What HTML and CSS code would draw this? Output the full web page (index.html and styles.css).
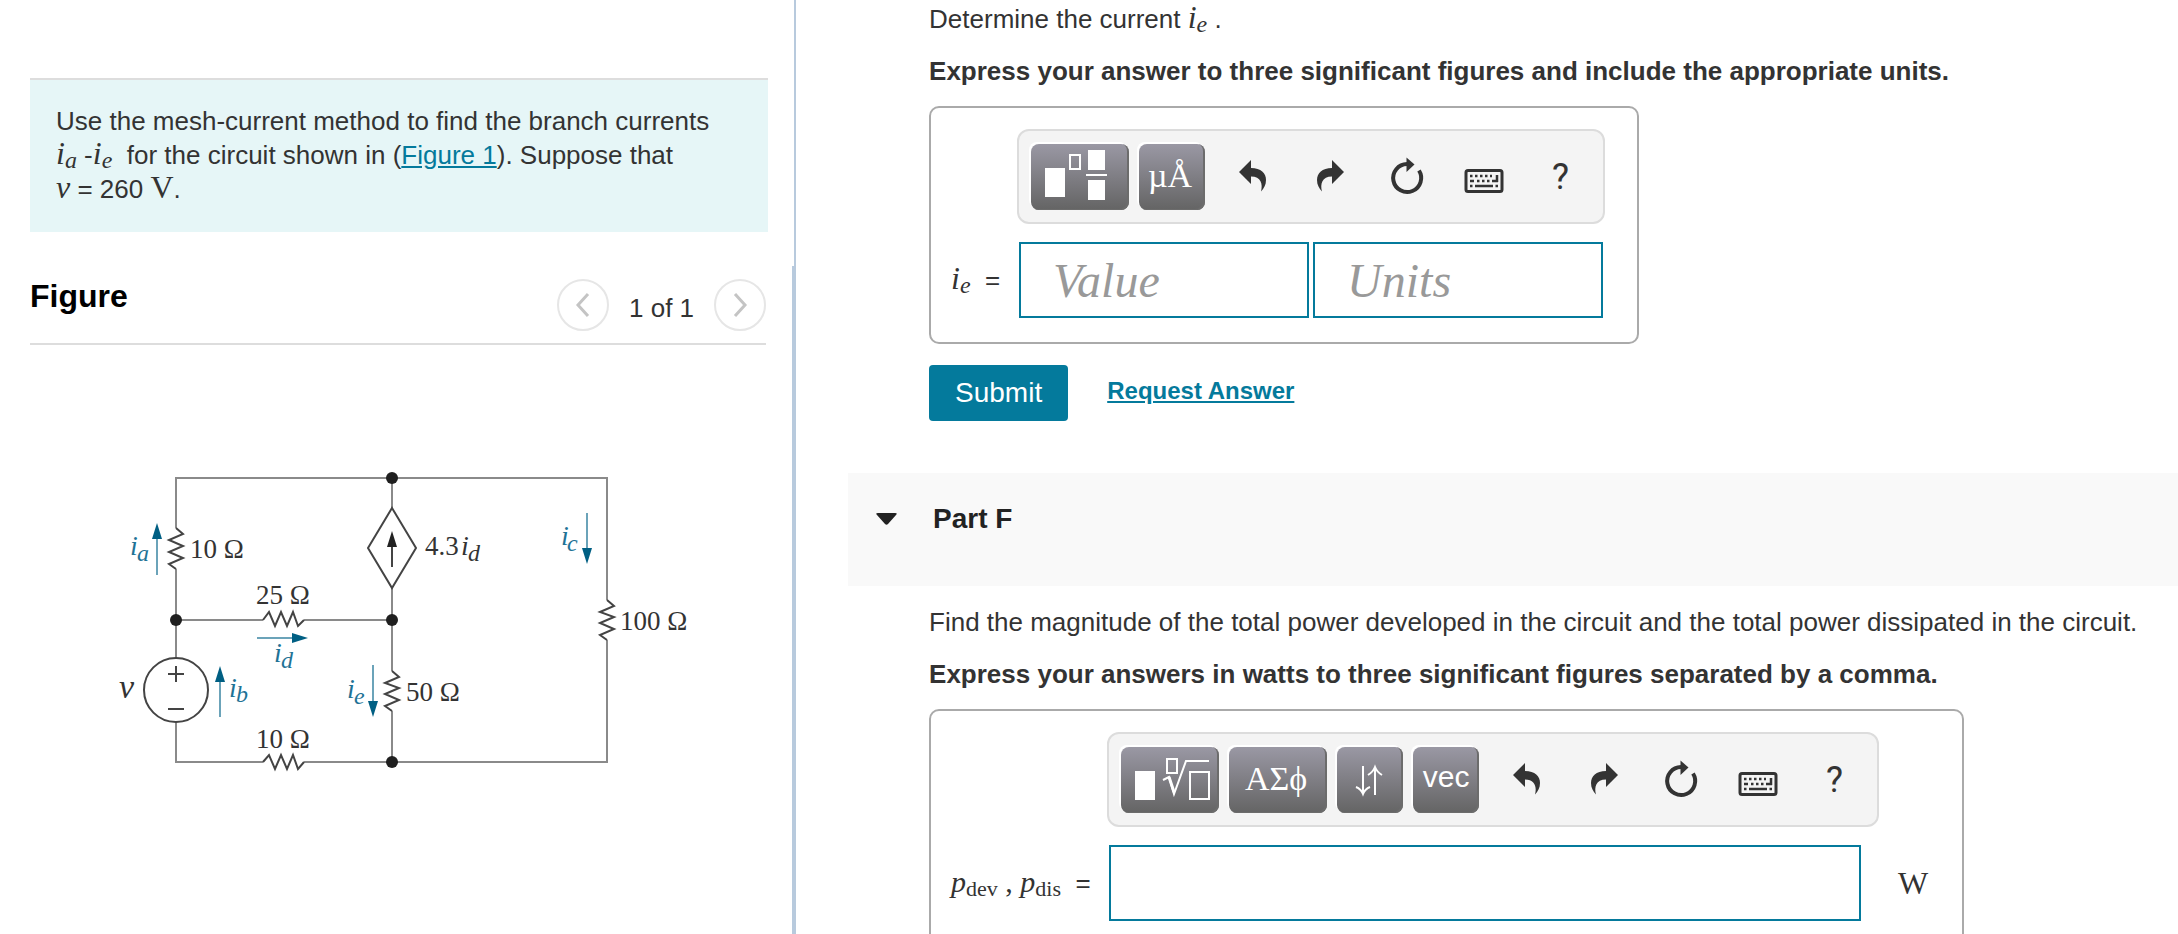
FILE: index.html
```
<!DOCTYPE html>
<html lang="en">
<head>
  <meta charset="UTF-8">
  <meta name="viewport" content="width=device-width, initial-scale=1.0">
  <title>Mesh-Current Method</title>
  <link rel="stylesheet" href="styles.css">
</head>
<body>
  <!-- Shared toolbar icons -->
  <svg class="sprite" aria-hidden="true">
    <symbol id="icon-undo" viewBox="0 0 40 40">
      <path d="M6 15L18 3V11C28 11 33 16 33 23C33 28 31 31 28 34.500C30 27 28 19.500 18 19.500V27Z" fill="#333"/>
    </symbol>
    <symbol id="icon-redo" viewBox="0 0 40 40">
      <path d="M34 15L22 3V11C12 11 7 16 7 23C7 28 9 31 12 34.500C10 27 12 19.500 22 19.500V27Z" fill="#333"/>
    </symbol>
    <symbol id="icon-reset" viewBox="0 0 40 40">
      <path d="M32 13.500A14 14 0 1 1 20 7" fill="none" stroke="#333" stroke-width="4"/>
      <path d="M19.500 0.500L27.500 7.500L19.500 15Z" fill="#333"/>
    </symbol>
    <symbol id="icon-keyboard" viewBox="0 0 40 40">
      <rect x="2" y="13.500" width="36" height="21" rx="2" fill="none" stroke="#333" stroke-width="3"/>
      <path d="M6 19H28" stroke="#333" stroke-width="2.500" stroke-dasharray="2.500 2.500"/>
      <path d="M6 24H10M13 24H15.500M18 24H20.500M23 24H25.500M28 24H34M33 18V25M6 29H8.500M11 29H29M31.500 29H34" fill="none" stroke="#333" stroke-width="2.500"/>
    </symbol>
  </svg>

  <div class="page">
    <aside class="sidebar">
      <section class="problem">
        <div class="problem-text">
          Use the mesh-current method to find the branch currents
          <span class="nowrap"><span class="math"><i>i</i><sub><i>a</i></sub></span> -<span class="math"><i>i</i><sub><i>e</i></sub></span></span>&nbsp; for the circuit shown in (<a href="#figure">Figure 1</a>). Suppose that
          <span class="nowrap"><span class="math"><i>v</i></span> = 260 <span class="math">V</span>.</span>
        </div>
      </section>

      <section class="figure" id="figure">
        <div class="figure-header">
          <h2>Figure</h2>
          <div class="pager">
            <button class="pager-button" aria-label="Previous figure">
              <svg width="16" height="26" viewBox="0 0 16 26"><path d="M13 2L3 13L13 24" fill="none" stroke="#c4c4c4" stroke-width="3"/></svg>
            </button>
            <span class="pager-count">1 of 1</span>
            <button class="pager-button" aria-label="Next figure">
              <svg width="16" height="26" viewBox="0 0 16 26"><path d="M3 2L13 13L3 24" fill="none" stroke="#c4c4c4" stroke-width="3"/></svg>
            </button>
          </div>
        </div>

        <svg class="circuit" width="590" height="315" viewBox="0 0 590 315" role="img" aria-label="Circuit diagram">
          <!-- Wires -->
          <g class="wire">
            <path d="M66 68V18H497V140M497 180V302H194M153 302H66V262M66 199V109"/>
            <path d="M66 160H153M194 160H282M282 18V48M282 128V211M282 251V302"/>
          </g>
          <!-- Resistors and sources -->
          <g class="part">
            <path d="M66 68L73 74L59 80L73 86L59 92L73 98L59 104L66 109"/>
            <path d="M282 211L289 217L275 223L289 228L275 234L289 240L275 246L282 251"/>
            <path d="M497 140L504 146L490 152L504 157L490 163L504 169L490 175L497 180"/>
            <path d="M153 160L159 152L165 166L171 152L177 166L183 152L188 166L194 160"/>
            <path d="M153 302L159 295L165 309L171 295L177 309L183 295L188 309L194 302"/>
            <circle cx="66" cy="230" r="32"/>
            <path d="M58 214H74M66 206V222M58 249H74"/>
            <path d="M282 48L306 88L282 128L258 88Z"/>
            <path d="M282 107V84"/>
          </g>
          <path d="M282 71L287 87H277Z" fill="#222"/>
          <g fill="#1f1f1f">
            <circle cx="282" cy="18" r="6"/>
            <circle cx="66" cy="160" r="6"/>
            <circle cx="282" cy="160" r="6"/>
            <circle cx="282" cy="302" r="6"/>
          </g>
          <!-- Branch current arrows -->
          <path class="arrow-line" d="M47 115V76M110 257V220M147 178H185M263 205V245M477 53V92"/>
          <g class="arrow-head">
            <path d="M47 63L52 79H42Z"/>
            <path d="M110 206L115 222H105Z"/>
            <path d="M198 178L182 173V183Z"/>
            <path d="M263 257L258 241H268Z"/>
            <path d="M477 104L472 88H482Z"/>
          </g>
          <g class="label">
            <text x="80" y="98">10 Ω</text>
            <text x="146" y="144">25 Ω</text>
            <text x="146" y="288">10 Ω</text>
            <text x="296" y="241">50 Ω</text>
            <text x="510" y="170">100 Ω</text>
            <text x="315" y="95">4.3</text>
            <text x="351" y="95" class="var">i</text>
            <text x="358" y="101" class="var-sub">d</text>
            <text x="9" y="238" class="var source">v</text>
          </g>
          <g class="label current">
            <text x="20" y="95" class="var">i</text><text x="27" y="101" class="var-sub">a</text>
            <text x="119" y="237" class="var">i</text><text x="126" y="242" class="var-sub">b</text>
            <text x="451" y="85" class="var">i</text><text x="457" y="91" class="var-sub">c</text>
            <text x="164" y="202" class="var">i</text><text x="171" y="208" class="var-sub">d</text>
            <text x="237" y="238" class="var">i</text><text x="244" y="244" class="var-sub">e</text>
          </g>
        </svg>
      </section>
    </aside>

    <main class="content">
      <section class="part-body">
        <p>Determine the current <span class="math"><i>i</i><sub><i>e</i></sub></span> .</p>
        <p class="instructions">Express your answer to three significant figures and include the appropriate units.</p>

        <div class="answer-box answer-box-units">
          <div class="toolbar">
            <button class="key key-wide" aria-label="Templates">
              <svg width="98" height="66" viewBox="0 0 98 66">
                <path d="M14 24H34V53H14ZM57 6H74V26H57ZM55 30H76V32H55ZM57 36H74V56H57Z" fill="#fff"/>
                <rect x="39" y="11" width="10" height="14" fill="none" stroke="#fff" stroke-width="2"/>
              </svg>
            </button>
            <button class="key key-serif" aria-label="Units">µÅ</button>
            <div class="tools">
              <button class="tool" aria-label="Undo"><svg><use href="#icon-undo"/></svg></button>
              <button class="tool" aria-label="Redo"><svg><use href="#icon-redo"/></svg></button>
              <button class="tool" aria-label="Reset"><svg><use href="#icon-reset"/></svg></button>
              <button class="tool" aria-label="Keyboard shortcuts"><svg><use href="#icon-keyboard"/></svg></button>
              <button class="tool" aria-label="Help">?</button>
            </div>
          </div>
          <label class="answer-label" for="value"><span class="math"><i>i</i><sub><i>e</i></sub></span>&nbsp; =</label>
          <div class="fields">
            <input type="text" id="value" placeholder="Value">
            <input type="text" id="units" placeholder="Units" aria-label="Units">
          </div>
        </div>

        <div class="actions">
          <button class="submit">Submit</button>
          <a class="request" href="#">Request Answer</a>
        </div>
      </section>

      <div class="part-header">
        <button class="part-toggle" aria-label="Collapse Part F">
          <svg width="21" height="12" viewBox="0 0 21 12"><path d="M2 0H19Q22 0 20 2L12 11Q10.500 12.500 9 11L1 2Q-1 0 2 0Z" fill="#222"/></svg>
        </button>
        <h2>Part F</h2>
      </div>

      <section class="part-body">
        <p>Find the magnitude of the total power developed in the circuit and the total power dissipated in the circuit.</p>
        <p class="instructions">Express your answers in watts to three significant figures separated by a comma.</p>

        <div class="answer-box answer-box-power">
          <div class="toolbar">
            <button class="key key-wide" aria-label="Templates">
              <svg width="98" height="66" viewBox="0 0 98 66">
                <rect x="14" y="24" width="20" height="29" fill="#fff"/>
                <path d="M46 12H56V26H46ZM69 25H88V52H69Z" fill="none" stroke="#fff" stroke-width="2"/>
                <path d="M42 33L48 30L53 47L65 14H88" fill="none" stroke="#fff" stroke-width="2"/>
                <path d="M48 30L53 45" stroke="#fff" stroke-width="3"/>
              </svg>
            </button>
            <button class="key key-wide key-serif" aria-label="Symbols">ΑΣϕ</button>
            <button class="key" aria-label="Arrows">
              <svg width="66" height="66" viewBox="0 0 66 66">
                <path d="M26 19V47M19 40Q24 42 26 47Q28 42 33 40M38 48V20M31 28Q36 25 38 20Q40 25 45 28" fill="none" stroke="#fff" stroke-width="2"/>
              </svg>
            </button>
            <button class="key key-sans" aria-label="Vector">vec</button>
            <div class="tools">
              <button class="tool" aria-label="Undo"><svg><use href="#icon-undo"/></svg></button>
              <button class="tool" aria-label="Redo"><svg><use href="#icon-redo"/></svg></button>
              <button class="tool" aria-label="Reset"><svg><use href="#icon-reset"/></svg></button>
              <button class="tool" aria-label="Keyboard shortcuts"><svg><use href="#icon-keyboard"/></svg></button>
              <button class="tool" aria-label="Help">?</button>
            </div>
          </div>
          <label class="answer-label" for="power"><span class="math"><i>p</i><sub>dev</sub> , <i>p</i><sub>dis</sub></span>&nbsp; =</label>
          <div class="fields">
            <input type="text" id="power">
            <span class="math unit">W</span>
          </div>
        </div>
      </section>
    </main>
  </div>
</body>
</html>
```
FILE: styles.css
```
* {
  box-sizing: border-box;
}

body {
  margin: 0;
  background: #fff;
  color: #333;
  font-family: "Liberation Sans", Arial, sans-serif;
  font-size: 26px;
  line-height: 34px;
}

h2,
p {
  margin: 0;
}

a {
  color: #047a9c;
}

button {
  padding: 0;
  border: none;
  background: none;
  color: inherit;
  font-family: inherit;
  cursor: pointer;
}

.sprite {
  display: none;
}

.page {
  display: flex;
  height: 100vh;
}

.nowrap {
  white-space: nowrap;
}

/* Math text */
.math {
  font-family: "Liberation Serif", "Times New Roman", serif;
  font-size: 32px;
  line-height: 0;
}

.math sub {
  font-size: 24px;
  line-height: 0;
  vertical-align: -4px;
}

/* Left side */
.sidebar {
  display: flex;
  flex-direction: column;
  flex: none;
  width: 36.55%;
}

.problem {
  padding: 78px 26px 34px 30px;
  border-right: 2px solid #b8cadd;
}

.problem-text {
  padding: 24px 26px 26px;
  border-top: 2px solid #ddd;
  background: #e6f6f7;
}

.figure {
  flex: 1;
  padding: 13px 26px 0 30px;
  border-right: 4px solid #b8cadd;
}

.figure-header {
  display: flex;
  justify-content: space-between;
  padding-bottom: 12px;
  border-bottom: 2px solid #ddd;
}

.figure-header h2 {
  color: #000;
  font-size: 32px;
  line-height: 34px;
}

.pager {
  display: flex;
  align-items: center;
  gap: 20px;
}

.pager-count {
  padding-top: 6px;
}

.pager-button {
  display: flex;
  align-items: center;
  justify-content: center;
  width: 52px;
  height: 52px;
  border: 2px solid #e6e6e6;
  border-radius: 50%;
}

/* Circuit diagram */
.circuit {
  display: block;
  margin: 115px 0 0 80px;
}

.wire {
  fill: none;
  stroke: #8a8a8a;
  stroke-width: 2;
}

.part {
  fill: none;
  stroke: #444;
  stroke-width: 2;
}

.label {
  fill: #333;
  font-family: "Liberation Serif", "Times New Roman", serif;
  font-size: 27px;
}

.var,
.var-sub {
  font-style: italic;
}

.var {
  font-size: 28px;
}

.var-sub {
  font-size: 24px;
}

.source {
  font-size: 34px;
}

.current {
  fill: #1f7396;
}

.arrow-line {
  fill: none;
  stroke: #6ba3b9;
  stroke-width: 2;
}

.arrow-head {
  fill: #005f83;
}

/* Right side */
.content {
  flex: 1;
  min-width: 0;
  padding: 2px 0 0 52px;
  overflow-y: auto;
  scrollbar-width: none;
}

.part-body {
  padding-left: 81px;
}

.instructions {
  margin: 18px 0;
  font-weight: bold;
}

.answer-box {
  display: grid;
  row-gap: 18px;
  width: fit-content;
  padding: 21px 32px 24px 20px;
  border: 2px solid #aaa;
  border-radius: 10px;
}

.answer-box-units {
  grid-template-columns: 66px auto;
}

.answer-box-power {
  grid-template-columns: 156px auto;
}

.answer-box-power .math {
  font-size: 30px;
}

.answer-box-power sub {
  font-size: 22px;
}

.toolbar {
  display: flex;
  grid-column: 2;
  justify-self: start;
  gap: 10px;
  padding: 13px 4px 12px 12px;
  border: 2px solid #dcdcdc;
  border-radius: 12px;
  background: #f4f4f4;
}

.key {
  width: 66px;
  height: 66px;
  border-radius: 8px;
  background: linear-gradient(#9a98a4, #646464);
  box-shadow: -2px -2px 0 #fff, inset -2px -1px 0 #6c6c6c;
  color: #fff;
}

.key svg {
  display: block;
}

.key-wide {
  width: 98px;
}

.key-serif {
  padding: 0 4px 2px 0;
  font-family: "Liberation Serif", "Times New Roman", serif;
  font-size: 34px;
}

.key-sans {
  padding-bottom: 6px;
  font-size: 30px;
}

.tools {
  display: flex;
  margin-left: -1px;
}

.tool {
  display: flex;
  align-items: center;
  justify-content: center;
  width: 77px;
  height: 66px;
  font-family: Roboto, sans-serif;
  font-size: 36px;
}

.tool svg {
  width: 40px;
  height: 40px;
}

.answer-label {
  align-self: center;
  white-space: nowrap;
}

.fields {
  display: flex;
  align-items: center;
  gap: 4px;
  padding: 0 2px;
}

.fields input {
  width: 290px;
  height: 76px;
  padding: 0 32px;
  border: 2px solid #047a9c;
  border-radius: 0;
  outline: none;
  font-family: "Liberation Serif", "Times New Roman", serif;
  font-size: 48px;
}

.fields input::placeholder {
  color: #999;
  font-style: italic;
}

.answer-box-power input {
  width: 752px;
}

.answer-box-power .unit {
  margin-left: 33px;
  font-size: 32px;
}

.actions {
  display: flex;
  align-items: center;
  gap: 39px;
  margin-top: 21px;
}

.submit {
  height: 56px;
  padding: 0 26px;
  border-radius: 4px;
  background: #047a9c;
  color: #fff;
  font-size: 28px;
}

.request {
  padding-bottom: 4px;
  font-size: 24px;
  font-weight: bold;
}

.part-header {
  display: flex;
  align-items: flex-start;
  gap: 36px;
  height: 113px;
  margin: 52px 0 19px;
  padding: 29px 28px;
  background: #f9f9f9;
}

.part-header h2 {
  color: #222;
  font-size: 28px;
}

.part-toggle {
  display: flex;
  align-items: center;
  height: 34px;
}
```
